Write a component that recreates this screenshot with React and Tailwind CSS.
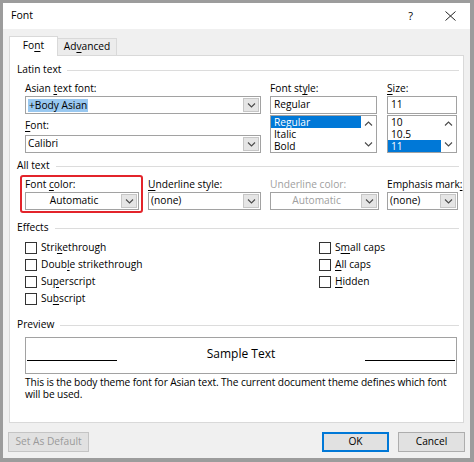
import React from "react";

const Acc = ({ children }) => <span className="underline underline-offset-[2px] decoration-[1px]">{children}</span>;

const Chev = ({ up, color = "#4a4a4a" }) => (
  <svg width="9" height="5" viewBox="0 0 9 5">
    <path d={up ? "M1 4.5 L4.5 1 L8 4.5" : "M1 0.5 L4.5 4 L8 0.5"} fill="none" stroke={color} strokeWidth="1.1" />
  </svg>
);

const ArrowBtn = () => (
  <div className="w-[16px] m-px bg-[#e5e5e5] border border-[#c6c6c6] flex items-center justify-center">
    <Chev />
  </div>
);

const Combo = ({ value, center, disabled, selected, className = "" }) => (
  <div className={`h-[18px] flex border border-[#a2a2a2] bg-white ${className}`}>
    <div className={`flex-1 flex items-center pl-[2px] ${center ? "justify-center" : ""} ${disabled ? "text-[#a0a0a0]" : ""}`}>
      {selected ? <span className="bg-[#99c8f0] px-px leading-[13px]">{value}</span> : value}
    </div>
    <ArrowBtn />
  </div>
);

const Field = ({ value }) => (
  <div className="h-[18px] flex items-center border border-[#a2a2a2] bg-white pl-[3px]">{value}</div>
);

const ListBox = ({ items, sel }) => (
  <div className="h-[38px] mt-px flex border border-[#a2a2a2] bg-white">
    <div className="flex-1">
      {items.map((it) => (
        <div
          key={it}
          className={`h-[12px] leading-[12px] pl-[3px] overflow-hidden ${it === sel ? "bg-[#0078d7] text-white" : ""}`}
        >
          {it}
        </div>
      ))}
    </div>
    <div className="w-[15px] flex flex-col justify-between items-center py-[5px]">
      <Chev up />
      <Chev />
    </div>
  </div>
);

const Group = ({ title, className = "" }) => (
  <div className={`flex items-center h-[14px] pl-[7px] pr-[4px] ${className}`}>
    <span>{title}</span>
    <div className="flex-1 h-px bg-[#dcdcdc] ml-[6px]" />
  </div>
);

const Label = ({ children, disabled }) => (
  <div className={`h-[14px] leading-[14px] whitespace-nowrap ${disabled ? "text-[#a0a0a0]" : ""}`}>{children}</div>
);

const Check = ({ children }) => (
  <div className="h-[17px] flex items-center gap-[4px]">
    <div className="w-[12px] h-[12px] border border-[#333] bg-white" />
    <span>{children}</span>
  </div>
);

export default function App() {
  return (
    <div
      className="w-[474px] h-[462px] bg-[#f0f0f0] border-t-[3px] border-l-[3px] border-r-[4px] border-b-[4px] border-[#9c9c9c] text-[10.2px] text-black flex flex-col"
      style={{ fontFamily: '"Open Sans", "Noto Sans", sans-serif' }}
    >
      {/* title bar */}
      <div className="h-[26px] bg-white flex items-center pl-[8px] pr-[14px]">
        <span className="text-[10.5px] flex-1">Font</span>
        <span className="text-[11px] mr-[32px]">?</span>
        <svg width="11" height="10" viewBox="0 0 11 10">
          <path d="M0.5 0.5 L10.5 9.5 M10.5 0.5 L0.5 9.5" stroke="#222" strokeWidth="1" />
        </svg>
      </div>

      <div className="flex-1 flex flex-col px-[6px] pt-[7px]">
        {/* tabs */}
        <div className="flex items-end h-[20px] -mb-px relative z-10">
          <div className="w-[49px] h-[20px] bg-white border border-b-0 border-[#d9d9d9] flex items-center justify-center pb-[2px]">
            Fo<Acc>n</Acc>t
          </div>
          <div className="w-[59px] h-[18px] bg-[#ececec] border border-l-0 border-[#d9d9d9] flex items-center justify-center pb-px">
            Ad<Acc>v</Acc>anced
          </div>
        </div>

        {/* panel */}
        <div className="h-[368px] bg-white border border-[#d9d9d9] flex flex-col">
          <Group title="Latin text" className="mt-[7px]" />
          <div className="flex pl-[15px] pr-[6px] mt-[4px]">
            <div className="w-[236px]">
              <Label>Asian <Acc>t</Acc>ext font:</Label>
              <Combo value="+Body Asian" selected className="mt-px" />
              <div className="mt-[4px]">
                <Label><Acc>F</Acc>ont:</Label>
              </div>
              <Combo value="Calibri" className="mt-[3px]" />
            </div>
            <div className="w-[107px] ml-[9px]">
              <Label>Font st<Acc>y</Acc>le:</Label>
              <div className="mt-px">
                <Field value="Regular" />
              </div>
              <ListBox items={["Regular", "Italic", "Bold"]} sel="Regular" />
            </div>
            <div className="w-[70px] ml-[10px]">
              <Label><Acc>S</Acc>ize:</Label>
              <div className="mt-px">
                <Field value="11" />
              </div>
              <ListBox items={["10", "10.5", "11"]} sel="11" />
            </div>
          </div>

          <Group title="All text" className="mt-[6px]" />
          <div className="flex pl-[15px] pr-[5px] mt-[4px]">
            <div className="w-[114px] relative">
              <Label>Font <Acc>c</Acc>olor:</Label>
              <Combo value="Automatic" center className="mt-px" />
              <div className="absolute -left-[5px] -top-[2px] -right-[4px] -bottom-[3px] border-2 border-[#e3242b] rounded-[3px]" />
            </div>
            <div className="w-[113px] ml-[9px]">
              <Label><Acc>U</Acc>nderline style:</Label>
              <Combo value="(none)" className="mt-px" />
            </div>
            <div className="w-[109px] ml-[9px]">
              <Label disabled>Underline color:</Label>
              <Combo value="Automatic" center disabled className="mt-px" />
            </div>
            <div className="w-[71px] ml-[8px]">
              <Label>Emphasis mark<Acc>:</Acc></Label>
              <Combo value="(none)" className="mt-px" />
            </div>
          </div>

          <Group title="Effects" className="mt-[11px]" />
          <div className="flex pl-[15px] mt-[4px]">
            <div className="w-[294px]">
              <Check>Stri<Acc>k</Acc>ethrough</Check>
              <Check>Doub<Acc>l</Acc>e strikethrough</Check>
              <Check>Su<Acc>p</Acc>erscript</Check>
              <Check>Su<Acc>b</Acc>script</Check>
            </div>
            <div>
              <Check>S<Acc>m</Acc>all caps</Check>
              <Check><Acc>A</Acc>ll caps</Check>
              <Check><Acc>H</Acc>idden</Check>
            </div>
          </div>

          <Group title="Preview" className="mt-[11px]" />
          <div className="ml-[15px] mr-[6px] mt-[5px] h-[37px] border border-[#a2a2a2] flex items-center px-px">
            <div className="w-[90px] h-px bg-black mt-[10px]" />
            <div className="flex-1 text-center text-[12px] -mt-[4px]">Sample Text</div>
            <div className="w-[90px] h-px bg-black mt-[10px]" />
          </div>
          <div className="pl-[15px] pr-[6px] mt-[3px] leading-[11.5px] tracking-[-0.1px]">
            This is the body theme font for Asian text. The current document theme defines which font will be used.
          </div>
        </div>

        {/* footer */}
        <div className="flex mt-[9px]">
          <div className="w-[81px] h-[20px] bg-[#e1e1e1] border border-[#c4c4c4] text-[#9a9a9a] flex items-center justify-center -ml-px">
            Set As Default
          </div>
          <div className="flex-1" />
          <div className="w-[67px] h-[20px] bg-[#e1e1e1] border-2 border-[#0078d7] flex items-center justify-center">OK</div>
          <div className="w-[67px] h-[20px] bg-[#e1e1e1] border border-[#adadad] flex items-center justify-center ml-[9px] -mr-px">
            Cancel
          </div>
        </div>
      </div>
    </div>
  );
}
